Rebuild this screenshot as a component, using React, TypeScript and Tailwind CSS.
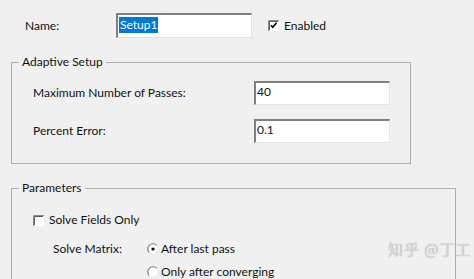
const font = { fontFamily: 'Lato, "Noto Sans CJK SC", sans-serif' };

const TextBox = ({ value, selected, w = "w-[136px]", h = "h-[24px]" }: { value: string; selected?: boolean; w?: string; h?: string }) => (
    <div
        className={`${w} ${h} bg-white border-t-2 border-l-2 border-r border-b border-t-[#7f7f7f] border-l-[#7f7f7f] border-r-[#e3e3e3] border-b-[#e3e3e3] flex items-start pl-[1px] pt-[1px] leading-[16px]`}
    >
        {selected ? (
            <span className="bg-[#0078d7] text-white px-[1px] mt-[1px]">{value}</span>
        ) : (
            <span>{value}</span>
        )}
    </div>
);

const CheckBox = ({ checked }: { checked?: boolean }) => (
    <svg width="11" height="11" viewBox="0 0 11 11" className="shrink-0">
        <rect x="0" y="0" width="11" height="11" fill="#ffffff" />
        <path d="M0.5 11V0.5H11" stroke="#8a8a8a" fill="none" />
        <path d="M1.5 10V1.5H10" stroke="#5a5a5a" fill="none" />
        {checked && <path d="M3 5.2 L4.8 7.2 L8.6 2.8" stroke="#000" strokeWidth="1.6" fill="none" />}
    </svg>
);

const Radio = ({ checked }: { checked?: boolean }) => (
    <svg width="12" height="12" viewBox="0 0 12 12" className="shrink-0">
        <circle cx="6" cy="6" r="5.2" fill="#ffffff" />
        <path d="M9.7 2.3 A5.2 5.2 0 0 0 2.3 9.7" stroke="#7a7a7a" strokeWidth="1.2" fill="none" />
        <path d="M2.3 9.7 A5.2 5.2 0 0 0 9.7 2.3" stroke="#e8e8e8" strokeWidth="1" fill="none" />
        {checked && <circle cx="6" cy="6" r="1.6" fill="#000" />}
    </svg>
);

const App = () => {
    return (
        <div className="relative w-[474px] h-[279px] bg-[#f0f0f0] overflow-hidden text-[12px] text-[#111] leading-[16px]" style={font}>
            <div className="flex items-center pt-[13px] pl-[25px]">
                <span className="w-[91px]">Name:</span>
                <TextBox value="Setup1" selected h="h-[25px]" />
                <div className="flex items-center ml-[16px] gap-[5px]">
                    <CheckBox checked />
                    <span>Enabled</span>
                </div>
            </div>

            <fieldset className="ml-[11px] mt-[16px] w-[400px] h-[110px] border border-[#adadad]">
                <legend className="ml-[7px] px-[3px]">Adaptive Setup</legend>
                <div className="flex flex-col gap-[14px] pt-[11px] pl-[21px]">
                    <div className="flex items-center">
                        <span className="w-[221px]">Maximum Number of Passes:</span>
                        <TextBox value="40" />
                    </div>
                    <div className="flex items-center">
                        <span className="w-[221px]">Percent Error:</span>
                        <TextBox value="0.1" />
                    </div>
                </div>
            </fieldset>

            <fieldset className="ml-[11px] mt-[16px] w-[445px] h-[200px] border border-[#adadad]">
                <legend className="ml-[7px] px-[3px]">Parameters</legend>
                <div className="flex flex-col pt-[16px] pl-[21px]">
                    <div className="flex items-center gap-[5px]">
                        <CheckBox />
                        <span>Solve Fields Only</span>
                    </div>
                    <div className="flex items-start mt-[13px] pl-[20px]">
                        <span className="w-[94px]">Solve Matrix:</span>
                        <div className="flex flex-col gap-[7px]">
                            <div className="flex items-center gap-[2px]">
                                <Radio checked />
                                <span>After last pass</span>
                            </div>
                            <div className="flex items-center gap-[2px]">
                                <Radio />
                                <span>Only after converging</span>
                            </div>
                        </div>
                    </div>
                </div>
            </fieldset>

            <div
                className="absolute left-[388px] top-[241px] text-[15px] text-[#d6d6d6] tracking-[1px]"
                style={{ fontFamily: '"Noto Sans CJK SC", sans-serif', textShadow: "0 0 1px #a8a8a8" }}
            >
                知乎 @丁工
            </div>
        </div>
    );
};

export default App;
